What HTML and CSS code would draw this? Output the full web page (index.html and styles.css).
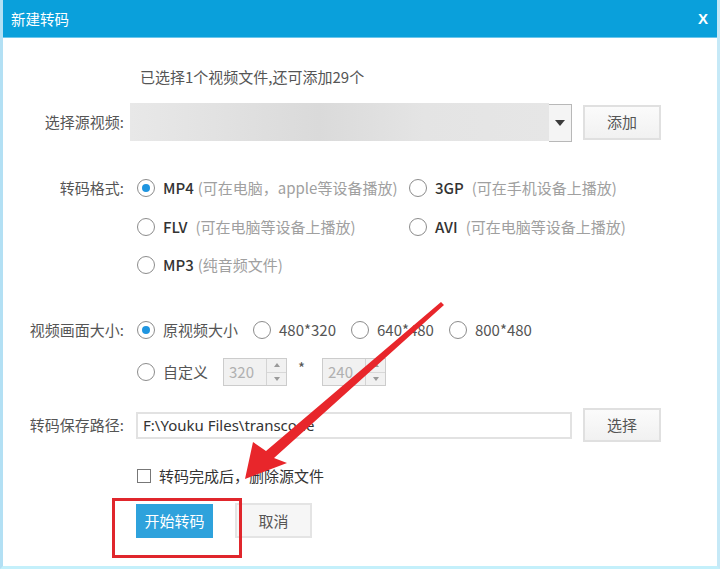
FILE: index.html
```html
<!DOCTYPE html>
<html lang="zh-CN">
<head>
<meta charset="utf-8">
<title>新建转码</title>
<link rel="stylesheet" href="styles.css">
</head>
<body>
<div class="dialog">
  <div class="titlebar">
    <span class="title">新建转码</span>
    <span class="close">X</span>
  </div>
  <div class="body">
    <div class="row info-row">
      <span class="label"></span>
      <span class="info-text">已选择1个视频文件,还可添加29个</span>
    </div>

    <div class="row source-row">
      <span class="label">选择源视频:</span>
      <div class="select">
        <div class="select-blur"></div>
        <div class="select-btn"><span class="tri-down"></span></div>
      </div>
      <button class="btn side-btn">添加</button>
    </div>

    <div class="section format-section">
      <span class="label sec-label">转码格式:</span>
      <div class="format-grid">
        <div class="opt"><span class="radio checked"></span><span class="opt-name">MP4</span><span class="desc">(可在电脑，apple等设备播放)</span></div>
        <div class="opt"><span class="radio"></span><span class="opt-name">3GP</span><span class="desc wide">(可在手机设备上播放)</span></div>
        <div class="opt"><span class="radio"></span><span class="opt-name">FLV</span><span class="desc wide">(可在电脑等设备上播放)</span></div>
        <div class="opt"><span class="radio"></span><span class="opt-name">AVI</span><span class="desc wide">(可在电脑等设备上播放)</span></div>
        <div class="opt"><span class="radio"></span><span class="opt-name">MP3</span><span class="desc">(纯音频文件)</span></div>
      </div>
    </div>

    <div class="section size-section">
      <span class="label sec-label">视频画面大小:</span>
      <div class="size-rows">
        <div class="size-line">
          <div class="opt"><span class="radio checked"></span><span class="size-name">原视频大小</span></div>
          <div class="opt"><span class="radio"></span><span class="size-name">480*320</span></div>
          <div class="opt"><span class="radio"></span><span class="size-name">640*480</span></div>
          <div class="opt"><span class="radio"></span><span class="size-name">800*480</span></div>
        </div>
        <div class="size-line custom-line">
          <div class="opt"><span class="radio"></span><span class="size-name">自定义</span></div>
          <div class="spin">
            <span class="spin-val">320</span>
            <span class="spin-btns"><span class="spin-up"><i class="tri-up-s"></i></span><span class="spin-down"><i class="tri-down-s"></i></span></span>
          </div>
          <span class="times">*</span>
          <div class="spin">
            <span class="spin-val">240</span>
            <span class="spin-btns"><span class="spin-up"><i class="tri-up-s"></i></span><span class="spin-down"><i class="tri-down-s"></i></span></span>
          </div>
        </div>
      </div>
    </div>

    <div class="row path-row">
      <span class="label">转码保存路径:</span>
      <div class="path-input">F:\Youku Files\transcode</div>
      <button class="btn side-btn path-btn">选择</button>
    </div>

    <div class="row check-row">
      <span class="label"></span>
      <span class="checkbox"></span>
      <span class="check-text">转码完成后，删除源文件</span>
    </div>

    <div class="row action-row">
      <span class="label"></span>
      <button class="btn primary">开始转码</button>
      <button class="btn cancel">取消</button>
    </div>
  </div>

  <div class="highlight"></div>
  <svg class="arrow" width="720" height="569" viewBox="0 0 720 569">
    <polygon points="245,479 253,442 266,451 441,302 444,305 274,458 287,463" fill="#e8262b"/>
  </svg>
</div>
</body>
</html>
```

FILE: styles.css
```css
html, body {
  margin: 0;
  padding: 0;
  background: #ffffff;
}

.dialog {
  position: relative;
  width: 720px;
  height: 569px;
  box-sizing: border-box;
  border-left: 3px solid #b3e0f4;
  border-right: 3px solid #c6e9f7;
  border-bottom: 3px solid #c4f0fb;
  font-family: "Noto Sans CJK SC", "Noto Sans", sans-serif;
  font-size: 15px;
  color: #555555;
  overflow: hidden;
}

.titlebar {
  height: 38px;
  margin-left: -3px;
  margin-right: -3px;
  background: #0aa0db;
  border-bottom: 1px solid #6cc6ec;
  box-sizing: border-box;
  display: flex;
  align-items: center;
  justify-content: space-between;
  padding: 0 12px 0 11px;
  color: #ffffff;
}

.title {
  font-size: 14.5px;
  line-height: 20px;
}

.close {
  font-family: "Liberation Sans", sans-serif;
  font-size: 15px;
  font-weight: bold;
  line-height: 20px;
}

.body {
  display: flex;
  flex-direction: column;
}

.row {
  display: flex;
  align-items: center;
}

.label {
  flex: none;
  width: 121px;
  text-align: right;
  line-height: 20px;
  color: #555555;
}

.info-row {
  margin-top: 25px;
  height: 28px;
}

.info-text {
  margin-left: 16px;
  line-height: 20px;
  color: #555555;
}

.source-row {
  margin-top: 12px;
  height: 38px;
}

.select {
  margin-left: 6px;
  width: 442px;
  height: 38px;
  display: flex;
}

.select-blur {
  flex: 1;
  background: linear-gradient(90deg, #e8e8e8 0%, #e2e2e2 20%, #dadada 45%, #e4e4e4 70%, #e6e6e6 100%);
}

.select-btn {
  width: 22px;
  height: 36px;
  margin-top: 1px;
  border: 1px solid #b8b8b8;
  border-left: none;
  background: #f4f4f4;
  display: flex;
  align-items: center;
  justify-content: center;
}

.tri-down {
  width: 0;
  height: 0;
  border-left: 5px solid transparent;
  border-right: 5px solid transparent;
  border-top: 6px solid #3a3a3a;
}

.btn {
  font-family: "Noto Sans CJK SC", "Noto Sans", sans-serif;
  font-size: 15px;
  line-height: 20px;
  padding: 0;
  cursor: pointer;
}

.side-btn {
  margin-left: 11px;
  width: 78px;
  height: 35px;
  border: 2px solid #e0e0e0;
  background: linear-gradient(#fbfbfb, #f1f1f1);
  color: #555555;
}

.section {
  display: flex;
  align-items: flex-start;
}

.sec-label {
  height: 30px;
  line-height: 30px;
}

.format-section {
  margin-top: 32px;
}

.format-grid {
  margin-left: 13px;
  display: grid;
  grid-template-columns: 272px auto;
  grid-auto-rows: 30px;
  row-gap: 8.5px;
}

.opt {
  display: flex;
  align-items: center;
  height: 30px;
}

.radio {
  flex: none;
  width: 18px;
  height: 18px;
  box-sizing: border-box;
  border: 1.5px solid #8c8c8c;
  border-radius: 50%;
  background: #ffffff;
  display: flex;
  align-items: center;
  justify-content: center;
  margin-right: 8px;
}

.radio.checked::after {
  content: "";
  width: 8px;
  height: 8px;
  border-radius: 50%;
  background: #1e95e0;
}

.opt-name {
  color: #333333;
  line-height: 20px;
  font-size: 15px;
  font-weight: 500;
}

.desc {
  margin-left: 4px;
  color: #a0a0a0;
  line-height: 20px;
}

.desc.wide {
  margin-left: 8px;
}

.size-section {
  margin-top: 35px;
}

.size-rows {
  margin-left: 13px;
  display: flex;
  flex-direction: column;
  gap: 12px;
}

.size-line {
  display: flex;
  align-items: center;
  height: 30px;
  gap: 15px;
}

.size-name {
  color: #555555;
  line-height: 20px;
}

.custom-line {
  gap: 0;
}

.spin {
  margin-left: 15px;
  width: 64px;
  height: 28px;
  box-sizing: border-box;
  border: 1px solid #cccccc;
  background: #f1f1f1;
  display: flex;
}

.spin-val {
  flex: 1;
  padding-left: 5px;
  line-height: 26px;
  color: #b0b0b0;
}

.spin-btns {
  width: 19px;
  border-left: 1px solid #d4d4d4;
  display: flex;
  flex-direction: column;
}

.spin-up, .spin-down {
  flex: 1;
  display: flex;
  align-items: center;
  justify-content: center;
}

.spin-up {
  border-bottom: 1px solid #d8d8d8;
}

.tri-up-s {
  width: 0;
  height: 0;
  border-left: 3px solid transparent;
  border-right: 3px solid transparent;
  border-bottom: 4px solid #9a9a9a;
}

.tri-down-s {
  width: 0;
  height: 0;
  border-left: 3px solid transparent;
  border-right: 3px solid transparent;
  border-top: 4px solid #9a9a9a;
}

.times {
  margin-left: 11px;
  color: #555555;
  line-height: 20px;
  position: relative;
  top: -4px;
}

.times + .spin {
  margin-left: 17px;
}

.path-row {
  margin-top: 21px;
  height: 34px;
}

.path-input {
  margin-left: 12px;
  width: 436px;
  height: 27px;
  box-sizing: border-box;
  border: 2px solid #e2e2e2;
  padding-left: 5px;
  line-height: 23px;
  color: #333333;
  font-family: "Noto Sans", "Noto Sans CJK SC", sans-serif;
  font-size: 15px;
}

.path-btn {
  height: 34px;
}

.check-row {
  margin-top: 24px;
  height: 20px;
}

.checkbox {
  margin-left: 13px;
  width: 14px;
  height: 14px;
  box-sizing: border-box;
  border: 1.5px solid #777777;
  background: #ffffff;
}

.check-text {
  margin-left: 8px;
  color: #333333;
  line-height: 20px;
}

.action-row {
  margin-top: 17px;
  height: 35px;
  align-items: flex-start;
}

.primary {
  margin-left: 12px;
  margin-top: 1px;
  width: 77px;
  height: 34px;
  border: none;
  background: #2ea2dc;
  color: #ffffff;
}

.cancel {
  margin-left: 22px;
  width: 77px;
  height: 35px;
  border: 2px solid #e4e4e4;
  background: #f6f6f6;
  color: #555555;
}

.highlight {
  position: absolute;
  left: 109px;
  top: 498px;
  width: 130px;
  height: 60px;
  box-sizing: border-box;
  border: 3px solid #e0262c;
}

.arrow {
  position: absolute;
  left: -3px;
  top: 0;
  pointer-events: none;
}
```
